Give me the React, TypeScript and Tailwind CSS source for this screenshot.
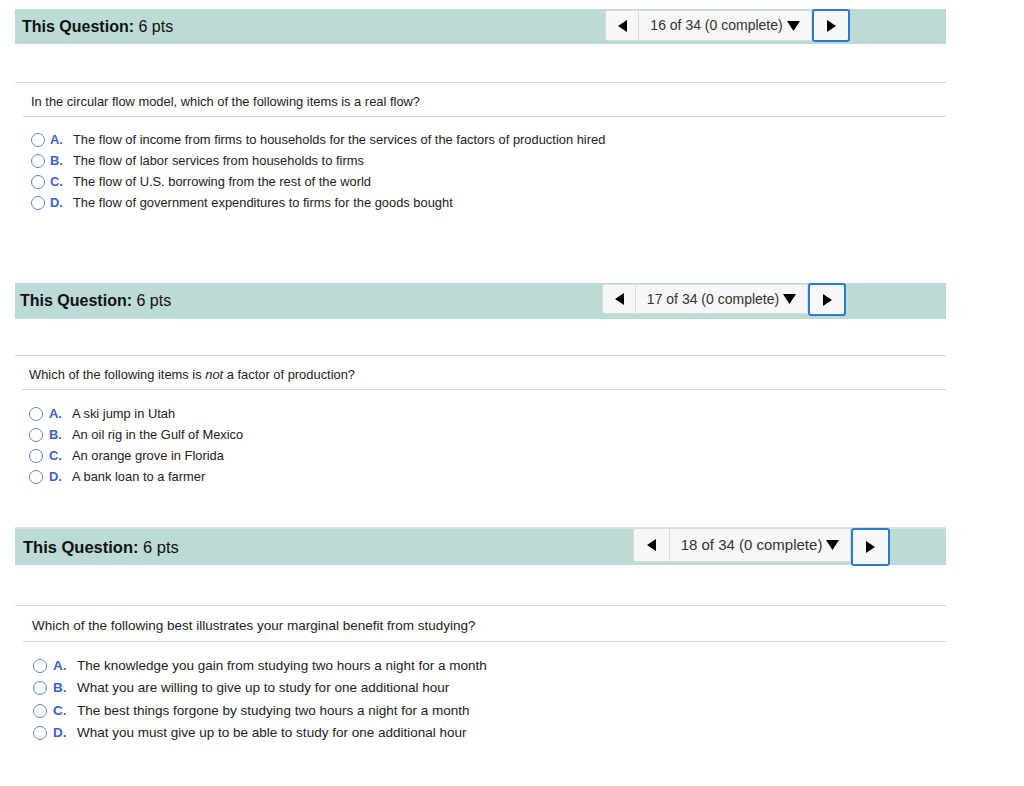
import React from "react";

type Cfg = {
  num: string;
  wrap: string;
  header: string;
  title: string;
  nav: string;
  navH: string;
  prevW: string;
  dropW: string;
  nextW: string;
  navText: string;
  gap: string;
  qRow: string;
  qText: React.ReactNode;
  line2: string;
  opts: string;
  row: string;
  radioCol: string;
  letterCol: string;
  options: string[];
};

const Radio = () => (
  <span className="inline-block h-[14px] w-[14px] rounded-full border-[1.5px] border-[#5a86d6] bg-white" />
);

const TriLeft = () => (
  <svg width="9" height="12" viewBox="0 0 9 12"><path d="M9 0 L0 6 L9 12 Z" fill="#000" /></svg>
);
const TriRight = () => (
  <svg width="9" height="12" viewBox="0 0 9 12"><path d="M0 0 L9 6 L0 12 Z" fill="#000" /></svg>
);
const TriDown = () => (
  <svg width="13" height="10" viewBox="0 0 13 10"><path d="M0 0 L13 0 L6.5 10 Z" fill="#000" /></svg>
);

function Section({ c }: { c: Cfg }) {
  return (
    <div className={c.wrap}>
      <div className={`flex items-center bg-[#bcdad6] ${c.header}`}>
        <div className={`text-[#111] ${c.title}`}>
          <span className="font-bold">This Question:</span> 6 pts
        </div>
        <div className={`ml-auto flex ${c.nav}`}>
          <div className={`flex ${c.navH} rounded-l-[3px] border border-[#dcdcdc] bg-[#f7f7f7]`}>
            <div className={`flex items-center justify-center border-r border-[#dcdcdc] ${c.prevW}`}>
              <TriLeft />
            </div>
            <div className={`flex items-center justify-center gap-[4px] text-[#333] ${c.dropW} ${c.navText}`}>
              <span>{c.num} of 34 (0 complete)</span>
              <TriDown />
            </div>
          </div>
          <div className={`flex items-center justify-center rounded-[3px] border-2 border-[#2a7bd0] bg-[#f7f7f7] ${c.nextW}`}>
            <TriRight />
          </div>
        </div>
      </div>
      <div className={`border-t border-[#d3d7e6] ${c.gap}`} />
      <div className={`flex items-center text-[#222] ${c.qRow}`}>{c.qText}</div>
      <div className={`border-t border-[#d3d7e6] ${c.line2}`} />
      <div className={c.opts}>
        {c.options.map((o, i) => (
          <div key={i} className={`flex items-center text-[#222] ${c.row}`}>
            <div className={`flex items-center ${c.radioCol}`}>
              <Radio />
            </div>
            <div className={`font-bold text-[#3b62c9] ${c.letterCol}`}>{"ABCD"[i]}.</div>
            <div>{o}</div>
          </div>
        ))}
      </div>
    </div>
  );
}

const s1: Cfg = {
  num: "16",
  wrap: "pt-[9px]",
  header: "h-[35px]",
  title: "pl-[7px] text-[16px]",
  nav: "mr-[96px] self-start mt-[1px]",
  navH: "h-[31px]",
  prevW: "w-[33px]",
  dropW: "w-[172px]",
  nextW: "w-[38px] h-[33px] -mt-[1px]",
  navText: "text-[14px]",
  gap: "mt-[38px]",
  qRow: "h-[33px] pt-[4px] pl-[16px] text-[12.9px]",
  qText: "In the circular flow model, which of the following items is a real flow?",
  line2: "ml-[8px]",
  opts: "pt-[12px]",
  row: "h-[21px] text-[12.9px]",
  radioCol: "w-[35px] pl-[16px]",
  letterCol: "w-[23px]",
  options: [
    "The flow of income from firms to households for the services of the factors of production hired",
    "The flow of labor services from households to firms",
    "The flow of U.S. borrowing from the rest of the world",
    "The flow of government expenditures to firms for the goods bought",
  ],
};

const s2: Cfg = {
  num: "17",
  wrap: "pt-[70px]",
  header: "h-[36px]",
  title: "pl-[5px] text-[16px]",
  nav: "mr-[100px] self-start mt-[1px]",
  navH: "h-[30px]",
  prevW: "w-[33px]",
  dropW: "w-[171px]",
  nextW: "w-[38px] h-[33px] -mt-[1px]",
  navText: "text-[14px]",
  gap: "mt-[36px]",
  qRow: "h-[33px] pt-[5px] pl-[14px] text-[12.9px]",
  qText: (
    <span>
      Which of the following items is <i>not</i> a factor of production?
    </span>
  ),
  line2: "ml-[7px]",
  opts: "pt-[13px]",
  row: "h-[21px] text-[12.9px]",
  radioCol: "w-[34px] pl-[14px]",
  letterCol: "w-[23px]",
  options: [
    "A ski jump in Utah",
    "An oil rig in the Gulf of Mexico",
    "An orange grove in Florida",
    "A bank loan to a farmer",
  ],
};

const s3: Cfg = {
  num: "18",
  wrap: "pt-[40px]",
  header: "h-[38px] border-t-2 border-[#d9e2ea]",
  title: "pl-[8px] text-[16.5px]",
  nav: "mr-[56px] self-start mt-[-1px]",
  navH: "h-[34px]",
  prevW: "w-[36px]",
  dropW: "w-[180px]",
  nextW: "w-[39px] h-[38px]",
  navText: "text-[15px]",
  gap: "mt-[40px]",
  qRow: "h-[35px] pt-[6px] pl-[17px] text-[13.5px]",
  qText: "Which of the following best illustrates your marginal benefit from studying?",
  line2: "ml-[8px]",
  opts: "pt-[13px]",
  row: "h-[22.33px] text-[13.5px]",
  radioCol: "w-[38px] pl-[18px]",
  letterCol: "w-[24px]",
  options: [
    "The knowledge you gain from studying two hours a night for a month",
    "What you are willing to give up to study for one additional hour",
    "The best things forgone by studying two hours a night for a month",
    "What you must give up to be able to study for one additional hour",
  ],
};

export default function App() {
  return (
    <div
      className="min-h-[786px] w-[1024px] bg-white pl-[15px]"
      style={{ fontFamily: '"Liberation Sans", Arial, sans-serif' }}
    >
      <div className="w-[931px]">
        <Section c={s1} />
        <Section c={s2} />
        <Section c={s3} />
      </div>
    </div>
  );
}
